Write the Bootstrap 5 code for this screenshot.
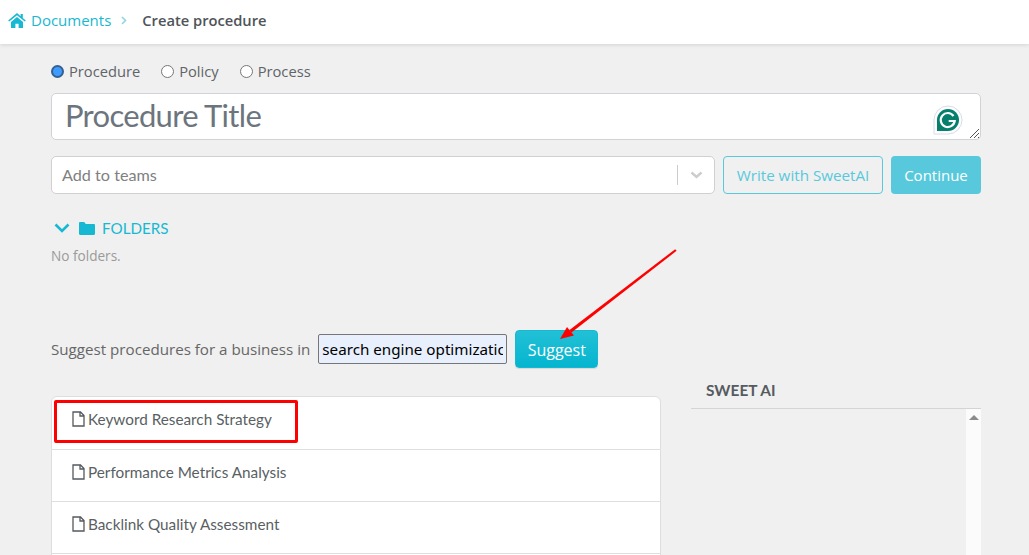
<!DOCTYPE html>
<html>
<head>
  <title>Create procedure</title>
  <link rel="stylesheet" href="https://cdn.jsdelivr.net/npm/bootstrap@5.3.0/dist/css/bootstrap.min.css">
  <style>
    html, body { height: 555px; overflow: hidden; }
    body { background: #f0f0f0; font-family: "Open Sans", sans-serif; font-size: 14px; color: #676a6c; position: relative; }
    .top-bar { height: 44px; background: #fff; box-shadow: 0 1px 4px rgba(0,0,0,.12); padding: 0 0 3px 8px; font-size: 15px; }
    .top-bar a { color: #17b8d1; text-decoration: none; }
    .home-ico { margin-right: 5px; }
    .crumb-sep { margin: 0 15px 0 10px; }
    .crumb-now { color: #4f5459; font-weight: 600; font-size: 14.7px; }
    .page-body { padding: 0 48px 0 51px; }
    .type-row { height: 49px; gap: 21px; padding-top: 6px; color: #5f6468; font-size: 14.7px; }
    .type-row .form-check-input { width: 13px; height: 13px; margin: 0 5px 0 0; border-color: #767676; background-color: #fff; }
    .type-row .form-check-input:checked { background-color: #3f9bff; border: 2px solid #35618f; background-image: none; }
    .title-box { height: 47px; border: 1px solid #d0d3d8; border-radius: 5px; background: #fff; font-family: Lato, sans-serif; font-size: 31px; letter-spacing: -.7px; line-height: 43px; padding: 0 13px; color: #6c757d; }
    .grammarly { position: absolute; right: 17px; bottom: 4px; }
    .grip { position: absolute; right: 1px; bottom: 1px; }
    .action-row { margin-top: 16px; height: 38px; gap: 8px; }
    .team-select { width: 664px; height: 38px; background: #fff; border: 1px solid #d0d0d0; border-radius: 5px; font-family: Lato, sans-serif; font-size: 16.2px; color: #808080; padding-left: 10px; }
    .select-caret { width: 37px; height: 20px; border-left: 1px solid #ccc; }
    .btn-ghost { width: 160px; height: 38px; border: 1px solid #58c9dc; color: #58c9dc; background: transparent; border-radius: 4px; font-size: 15.2px; padding: 0; }
    .btn-cont { width: 90px; height: 38px; background: #58c9dc; color: #fff; border: 0; border-radius: 4px; font-size: 15px; padding: 0; }
    .folders-head { margin-top: 25px; height: 18px; font-family: Lato, sans-serif; font-size: 15.2px; color: #17b8d1; padding-left: 3px; }
    .folder-ico { margin: 0 7px 0 9px; }
    .no-folders { margin-top: 10px; font-size: 13.6px; color: #9a9a9a; line-height: 18px; }
    .suggest-row { margin-top: 65px; height: 38px; font-size: 15.15px; color: #666; }
    .suggest-input { width: 189px; height: 30px; margin: 0 8px; border: 1px solid #767676; border-radius: 2px; background: #e8f0fe; color: #000; font-family: "Noto Sans", sans-serif; font-size: 15.2px; padding: 0 3px; }
    .btn-suggest { width: 83px; height: 38px; border: 1px solid #17b8d1; border-radius: 4px; background: linear-gradient(#22c0d6, #05b5cf); color: #fff; font-size: 16px; padding: 2px 0 0; box-shadow: 0 1px 1px rgba(0,0,0,.1); }
    .lower-row { margin-top: 28px; height: 159px; overflow: hidden; }
    .proc-list { width: 610px; flex: none; }
    .proc-list .list-group-item { height: 52px; padding: 12px 20px; font-family: Lato, sans-serif; font-size: 15.3px; line-height: 20px; color: #5a5f63; border-color: #dedede; }
    .proc-list .list-group-item:first-child { height: 53.5px; }
    .proc-list svg { vertical-align: -2px; margin-right: 3px; }
    .ai-panel { width: 290px; margin-left: 30px; height: 159px; }
    .ai-head { height: 13px; border-bottom: 1px solid #d4d4d4; }
    .ai-label { position: absolute; left: 706px; top: 380px; line-height: 20px; font-family: Lato, sans-serif; font-size: 15.4px; font-weight: 700; color: #565b60; }
    .ai-scroll { width: 15px; height: 147px; background: #fbfbfb; margin-left: auto; padding-top: 6px; }
    .up-tri { width: 0; height: 0; margin: 0 auto; border: 5px solid transparent; border-top: 0; border-bottom: 5px solid #8a8a8a; }
    .mark-box { position: absolute; left: 54px; top: 400px; width: 244px; height: 43px; border: 3px solid #f00; border-radius: 2px; }
    .mark-arrow { position: absolute; left: 0; top: 0; pointer-events: none; }
  </style>
</head>
<body>
  <div class="top-bar d-flex align-items-center">
    <a href="#" class="d-flex align-items-center">
      <svg class="home-ico" width="18" height="15" viewBox="0 0 18 15"><path fill="#17b8d1" d="M9 0 .2 7.4l1 1.2L9 2.2l7.8 6.4 1-1.2-3-2.5V1h-2.200v2.200zM3 9.100V15h4.400v-4.200h3.200V15H15V9.100L9 4.100z"/></svg>
      <span>Documents</span>
    </a>
    <svg class="crumb-sep" width="6" height="9" viewBox="0 0 6 9"><path d="M1 1l3.500 3.500L1 8" fill="none" stroke="#8fd6e2" stroke-width="1.600"/></svg>
    <span class="crumb-now">Create procedure</span>
  </div>

  <div class="page-body">
    <div class="type-row d-flex align-items-center">
      <label class="d-flex align-items-center"><input class="form-check-input mt-0" type="radio" name="doctype" checked>Procedure</label>
      <label class="d-flex align-items-center"><input class="form-check-input mt-0" type="radio" name="doctype">Policy</label>
      <label class="d-flex align-items-center"><input class="form-check-input mt-0" type="radio" name="doctype">Process</label>
    </div>

    <div class="title-box position-relative">
      Procedure Title
      <svg class="grammarly" width="30" height="30" viewBox="0 0 30 30">
        <path d="M1 29V15a14 14 0 1 1 14 14z" fill="#fff" stroke="#d8dbe8"/>
        <path d="M4 26V15a11 11 0 1 1 11 11z" fill="#05806c"/>
        <path d="M20.500 11a7 7 0 1 0 1.200 5h-6" fill="none" stroke="#fff" stroke-width="2.200"/>
      </svg>
      <svg class="grip" width="9" height="9" viewBox="0 0 9 9"><path d="M0 9l9-9M4 9l5-5M8 9l1-1" stroke="#555" stroke-width="1" fill="none"/></svg>
    </div>

    <div class="action-row d-flex">
      <div class="team-select d-flex align-items-center justify-content-between">
        <span>Add to teams</span>
        <div class="select-caret d-flex align-items-center justify-content-center">
          <svg width="13" height="8" viewBox="0 0 13 8"><path d="M1.500 1.500l5 4.500 5-4.500" fill="none" stroke="#ccc" stroke-width="2.400"/></svg>
        </div>
      </div>
      <button class="btn btn-ghost">Write with SweetAI</button>
      <button class="btn btn-cont">Continue</button>
    </div>

    <div class="folders-head d-flex align-items-center">
      <svg width="16" height="10" viewBox="0 0 16 10"><path d="M1.500 1.500 8 8l6.500-6.500" fill="none" stroke="#17b8d1" stroke-width="2.600"/></svg>
      <svg class="folder-ico" width="16" height="13" viewBox="0 0 16 13"><path fill="#17b8d1" d="M0 1.200C0 .5.500 0 1.200 0h4l1.600 2h8C15.500 2 16 2.500 16 3.200v8.600c0 .7-.5 1.200-1.200 1.200H1.200C.5 13 0 12.500 0 11.800z"/></svg>
      FOLDERS
    </div>
    <div class="no-folders">No folders.</div>

    <div class="suggest-row d-flex align-items-center">
      <span>Suggest procedures for a business in</span>
      <input class="suggest-input" type="text" value="search engine optimization">
      <button class="btn btn-suggest">Suggest</button>
    </div>

    <div class="lower-row d-flex align-items-start">
      <ul class="list-group proc-list">
        <li class="list-group-item"><svg width="13" height="16" viewBox="0 0 13 16"><path d="M1 1h7.500L12 4.500V15H1zM8 1v4h4" fill="none" stroke="#55595e" stroke-width="1.300"/></svg>Keyword Research Strategy</li>
        <li class="list-group-item"><svg width="13" height="16" viewBox="0 0 13 16"><path d="M1 1h7.500L12 4.500V15H1zM8 1v4h4" fill="none" stroke="#55595e" stroke-width="1.300"/></svg>Performance Metrics Analysis</li>
        <li class="list-group-item"><svg width="13" height="16" viewBox="0 0 13 16"><path d="M1 1h7.500L12 4.500V15H1zM8 1v4h4" fill="none" stroke="#55595e" stroke-width="1.300"/></svg>Backlink Quality Assessment</li>
        <li class="list-group-item"></li>
      </ul>
      <div class="ai-panel">
        <div class="ai-head"></div>
        <div class="ai-scroll"><div class="up-tri"></div></div>
      </div>
    </div>
  </div>

  <div class="ai-label">SWEET AI</div>
  <div class="mark-box"></div>
  <svg class="mark-arrow" width="1029" height="555" viewBox="0 0 1029 555">
    <path d="M675.200 249.200 676.600 250.800 571.500 332.500 569.500 330z" fill="#f00"/>
    <path d="M560 339 567 327 574 335.500z" fill="#f00"/>
  </svg>
</body>
</html>
